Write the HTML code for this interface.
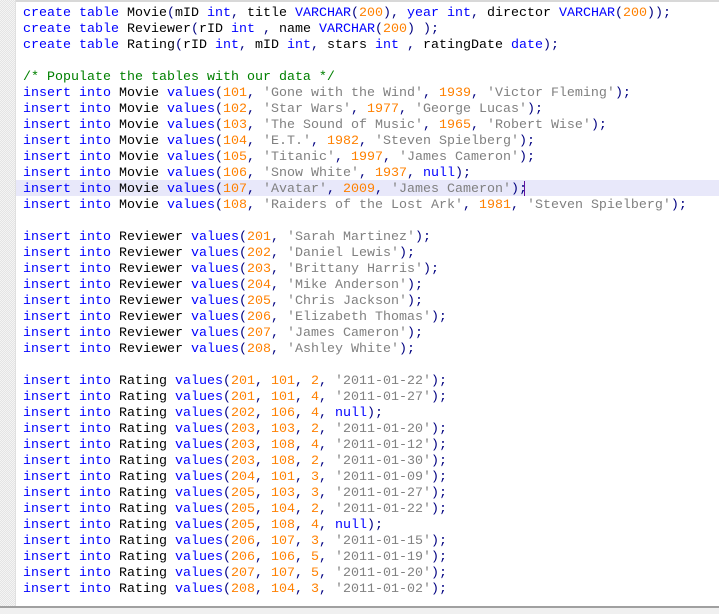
<!DOCTYPE html>
<html><head><meta charset="utf-8"><style>
html,body{margin:0;padding:0;width:719px;height:614px;overflow:hidden;background:#fff;position:relative}
#g{position:absolute;left:0;top:0;width:15px;height:607px;background:repeating-conic-gradient(#e4e4e4 0 25%,#f4f4f4 0 50%) 0 0/2px 2px;border-right:1px solid #e0e0e0}
#top{position:absolute;left:0;top:0;width:719px;height:2px;background:#d8d8d8}
#bot{position:absolute;left:0;top:606px;width:719px;height:8px;background:#f0f0f0;border-top:2px solid #a0a0a0}
#hl{position:absolute;left:16px;top:180px;width:703px;height:16px;background:#e8e8fa}
#cur{position:absolute;left:524px;top:181px;width:1px;height:15px;background:#6010a0}
pre{position:absolute;left:23px;top:6px;margin:0;font-family:"Liberation Mono",monospace;font-size:13.33px;line-height:16px;color:#000;letter-spacing:0}
.k{color:#0000ff}.n{color:#ff8000}.s{color:#808080}.o{color:#000080}.c{color:#008000}
</style></head><body>
<div id="top"></div><div id="g"></div><div id="hl"></div><div id="cur"></div>
<pre><span class="k">create table</span> Movie<span class="o">(</span>mID <span class="k">int</span><span class="o">,</span> title <span class="k">VARCHAR</span><span class="o">(</span><span class="n">200</span><span class="o">),</span> <span class="k">year int</span><span class="o">,</span> director <span class="k">VARCHAR</span><span class="o">(</span><span class="n">200</span><span class="o">));</span>
<span class="k">create table</span> Reviewer<span class="o">(</span>rID <span class="k">int</span> <span class="o">,</span> name <span class="k">VARCHAR</span><span class="o">(</span><span class="n">200</span><span class="o">)</span> <span class="o">);</span>
<span class="k">create table</span> Rating<span class="o">(</span>rID <span class="k">int</span><span class="o">,</span> mID <span class="k">int</span><span class="o">,</span> stars <span class="k">int</span> <span class="o">,</span> ratingDate <span class="k">date</span><span class="o">);</span>

<span class="c">/* Populate the tables with our data */</span>
<span class="k">insert into</span> Movie <span class="k">values</span><span class="o">(</span><span class="n">101</span><span class="o">,</span> <span class="s">'Gone with the Wind'</span><span class="o">,</span> <span class="n">1939</span><span class="o">,</span> <span class="s">'Victor Fleming'</span><span class="o">);</span>
<span class="k">insert into</span> Movie <span class="k">values</span><span class="o">(</span><span class="n">102</span><span class="o">,</span> <span class="s">'Star Wars'</span><span class="o">,</span> <span class="n">1977</span><span class="o">,</span> <span class="s">'George Lucas'</span><span class="o">);</span>
<span class="k">insert into</span> Movie <span class="k">values</span><span class="o">(</span><span class="n">103</span><span class="o">,</span> <span class="s">'The Sound of Music'</span><span class="o">,</span> <span class="n">1965</span><span class="o">,</span> <span class="s">'Robert Wise'</span><span class="o">);</span>
<span class="k">insert into</span> Movie <span class="k">values</span><span class="o">(</span><span class="n">104</span><span class="o">,</span> <span class="s">'E.T.'</span><span class="o">,</span> <span class="n">1982</span><span class="o">,</span> <span class="s">'Steven Spielberg'</span><span class="o">);</span>
<span class="k">insert into</span> Movie <span class="k">values</span><span class="o">(</span><span class="n">105</span><span class="o">,</span> <span class="s">'Titanic'</span><span class="o">,</span> <span class="n">1997</span><span class="o">,</span> <span class="s">'James Cameron'</span><span class="o">);</span>
<span class="k">insert into</span> Movie <span class="k">values</span><span class="o">(</span><span class="n">106</span><span class="o">,</span> <span class="s">'Snow White'</span><span class="o">,</span> <span class="n">1937</span><span class="o">,</span> <span class="k">null</span><span class="o">);</span>
<span class="k">insert into</span> Movie <span class="k">values</span><span class="o">(</span><span class="n">107</span><span class="o">,</span> <span class="s">'Avatar'</span><span class="o">,</span> <span class="n">2009</span><span class="o">,</span> <span class="s">'James Cameron'</span><span class="o">);</span>
<span class="k">insert into</span> Movie <span class="k">values</span><span class="o">(</span><span class="n">108</span><span class="o">,</span> <span class="s">'Raiders of the Lost Ark'</span><span class="o">,</span> <span class="n">1981</span><span class="o">,</span> <span class="s">'Steven Spielberg'</span><span class="o">);</span>

<span class="k">insert into</span> Reviewer <span class="k">values</span><span class="o">(</span><span class="n">201</span><span class="o">,</span> <span class="s">'Sarah Martinez'</span><span class="o">);</span>
<span class="k">insert into</span> Reviewer <span class="k">values</span><span class="o">(</span><span class="n">202</span><span class="o">,</span> <span class="s">'Daniel Lewis'</span><span class="o">);</span>
<span class="k">insert into</span> Reviewer <span class="k">values</span><span class="o">(</span><span class="n">203</span><span class="o">,</span> <span class="s">'Brittany Harris'</span><span class="o">);</span>
<span class="k">insert into</span> Reviewer <span class="k">values</span><span class="o">(</span><span class="n">204</span><span class="o">,</span> <span class="s">'Mike Anderson'</span><span class="o">);</span>
<span class="k">insert into</span> Reviewer <span class="k">values</span><span class="o">(</span><span class="n">205</span><span class="o">,</span> <span class="s">'Chris Jackson'</span><span class="o">);</span>
<span class="k">insert into</span> Reviewer <span class="k">values</span><span class="o">(</span><span class="n">206</span><span class="o">,</span> <span class="s">'Elizabeth Thomas'</span><span class="o">);</span>
<span class="k">insert into</span> Reviewer <span class="k">values</span><span class="o">(</span><span class="n">207</span><span class="o">,</span> <span class="s">'James Cameron'</span><span class="o">);</span>
<span class="k">insert into</span> Reviewer <span class="k">values</span><span class="o">(</span><span class="n">208</span><span class="o">,</span> <span class="s">'Ashley White'</span><span class="o">);</span>

<span class="k">insert into</span> Rating <span class="k">values</span><span class="o">(</span><span class="n">201</span><span class="o">,</span> <span class="n">101</span><span class="o">,</span> <span class="n">2</span><span class="o">,</span> <span class="s">'2011-01-22'</span><span class="o">);</span>
<span class="k">insert into</span> Rating <span class="k">values</span><span class="o">(</span><span class="n">201</span><span class="o">,</span> <span class="n">101</span><span class="o">,</span> <span class="n">4</span><span class="o">,</span> <span class="s">'2011-01-27'</span><span class="o">);</span>
<span class="k">insert into</span> Rating <span class="k">values</span><span class="o">(</span><span class="n">202</span><span class="o">,</span> <span class="n">106</span><span class="o">,</span> <span class="n">4</span><span class="o">,</span> <span class="k">null</span><span class="o">);</span>
<span class="k">insert into</span> Rating <span class="k">values</span><span class="o">(</span><span class="n">203</span><span class="o">,</span> <span class="n">103</span><span class="o">,</span> <span class="n">2</span><span class="o">,</span> <span class="s">'2011-01-20'</span><span class="o">);</span>
<span class="k">insert into</span> Rating <span class="k">values</span><span class="o">(</span><span class="n">203</span><span class="o">,</span> <span class="n">108</span><span class="o">,</span> <span class="n">4</span><span class="o">,</span> <span class="s">'2011-01-12'</span><span class="o">);</span>
<span class="k">insert into</span> Rating <span class="k">values</span><span class="o">(</span><span class="n">203</span><span class="o">,</span> <span class="n">108</span><span class="o">,</span> <span class="n">2</span><span class="o">,</span> <span class="s">'2011-01-30'</span><span class="o">);</span>
<span class="k">insert into</span> Rating <span class="k">values</span><span class="o">(</span><span class="n">204</span><span class="o">,</span> <span class="n">101</span><span class="o">,</span> <span class="n">3</span><span class="o">,</span> <span class="s">'2011-01-09'</span><span class="o">);</span>
<span class="k">insert into</span> Rating <span class="k">values</span><span class="o">(</span><span class="n">205</span><span class="o">,</span> <span class="n">103</span><span class="o">,</span> <span class="n">3</span><span class="o">,</span> <span class="s">'2011-01-27'</span><span class="o">);</span>
<span class="k">insert into</span> Rating <span class="k">values</span><span class="o">(</span><span class="n">205</span><span class="o">,</span> <span class="n">104</span><span class="o">,</span> <span class="n">2</span><span class="o">,</span> <span class="s">'2011-01-22'</span><span class="o">);</span>
<span class="k">insert into</span> Rating <span class="k">values</span><span class="o">(</span><span class="n">205</span><span class="o">,</span> <span class="n">108</span><span class="o">,</span> <span class="n">4</span><span class="o">,</span> <span class="k">null</span><span class="o">);</span>
<span class="k">insert into</span> Rating <span class="k">values</span><span class="o">(</span><span class="n">206</span><span class="o">,</span> <span class="n">107</span><span class="o">,</span> <span class="n">3</span><span class="o">,</span> <span class="s">'2011-01-15'</span><span class="o">);</span>
<span class="k">insert into</span> Rating <span class="k">values</span><span class="o">(</span><span class="n">206</span><span class="o">,</span> <span class="n">106</span><span class="o">,</span> <span class="n">5</span><span class="o">,</span> <span class="s">'2011-01-19'</span><span class="o">);</span>
<span class="k">insert into</span> Rating <span class="k">values</span><span class="o">(</span><span class="n">207</span><span class="o">,</span> <span class="n">107</span><span class="o">,</span> <span class="n">5</span><span class="o">,</span> <span class="s">'2011-01-20'</span><span class="o">);</span>
<span class="k">insert into</span> Rating <span class="k">values</span><span class="o">(</span><span class="n">208</span><span class="o">,</span> <span class="n">104</span><span class="o">,</span> <span class="n">3</span><span class="o">,</span> <span class="s">'2011-01-02'</span><span class="o">);</span></pre>
<div id="bot"></div>
</body></html>
